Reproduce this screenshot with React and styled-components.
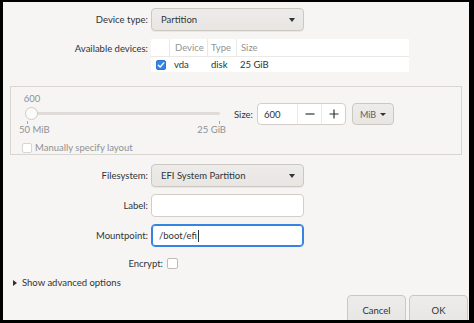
import React from 'react';
import styled, { createGlobalStyle } from "styled-components";

const GlobalStyle = createGlobalStyle`
    html, body {
        margin: 0;
        background: #000;
    }
    body {
        font-family: Lato, "Noto Sans", sans-serif;
        font-size: 9.5px;
        color: #2e3436;
    }
`;

const Dialog = styled.div`
    margin: 2px 0 0 3px;
    width: 466px;
    height: 318px;
    background: #f6f5f4;
    overflow: hidden;
    display: flex;
    flex-direction: column;
`;

const Form = styled.div`
    display: grid;
    grid-template-columns: 145px auto;
    column-gap: 3px;
    row-gap: ${p => p.gap || 8}px;
    justify-items: start;
    align-items: center;
    margin-top: ${p => p.top || 0}px;
`;

const Label = styled.div`
    justify-self: end;
    align-self: ${p => p.top ? 'start' : 'center'};
    margin-top: ${p => p.top ? 4 : 0}px;
    white-space: nowrap;
`;

const Combo = styled.div`
    box-sizing: border-box;
    width: 153px;
    height: 23px;
    display: flex;
    align-items: center;
    justify-content: space-between;
    padding: 0 8px 0 9px;
    background: linear-gradient(#eeecea, #e8e6e3);
    border: 1px solid #cdc7c2;
    border-radius: 4px;
    box-shadow: 0 1px 0 rgba(0,0,0,0.05);
`;

const Arrow = styled.span`
    width: 0;
    height: 0;
    border-left: ${p => p.size || 3.5}px solid transparent;
    border-right: ${p => p.size || 3.5}px solid transparent;
    border-top: ${p => (p.size || 3.5) + 0.5}px solid #2e3436;
`;

const Table = styled.div`
    width: 258px;
    background: #fff;
    display: grid;
    grid-template-columns: 19px 38px 29px 1fr;
`;

const HeadCell = styled.div`
    height: 18px;
    display: flex;
    align-items: center;
    padding-left: ${p => p.pad || 4}px;
    color: #919494;
    border-bottom: 1px solid #ebe9e6;
    border-right: ${p => p.last ? 'none' : '1px solid #ebe9e6'};
    box-sizing: border-box;
`;

const Cell = styled.div`
    height: 15px;
    display: flex;
    align-items: center;
    padding-left: ${p => p.pad || 0}px;
`;

const Check = styled.span`
    box-sizing: border-box;
    width: ${p => p.size || 10}px;
    height: ${p => p.size || 10}px;
    border-radius: 2px;
    display: inline-flex;
    align-items: center;
    justify-content: center;
    flex: none;
    background: ${p => p.checked ? '#3584e4' : '#fff'};
    border: 1px solid ${p => p.checked ? '#2a76d1' : p.dim ? '#d8d4d0' : '#c0bbb6'};
`;

const Frame = styled.div`
    margin: 14px 7px 0;
    border: 1px solid #d8d4d0;
    padding: 6px 0 1px 8px;
`;

const FrameTop = styled.div`
    display: flex;
    align-items: flex-start;
`;

const Scale = styled.div`
    width: 207px;
    color: #8e9192;
`;

const ScaleValue = styled.div`
    width: 26px;
    text-align: center;
    line-height: 12px;
`;

const SliderRow = styled.div`
    position: relative;
    height: 14px;
    margin-top: 2px;
`;

const Trough = styled.div`
    position: absolute;
    left: 8px;
    width: 193px;
    top: 5px;
    height: 3px;
    border-radius: 2px;
    background: #dedbd8;
`;

const Handle = styled.div`
    position: absolute;
    left: 6px;
    top: 0;
    width: 13px;
    height: 13px;
    box-sizing: border-box;
    border-radius: 50%;
    background: #fbfbfa;
    border: 1px solid #cfcbc7;
`;

const Ticks = styled.div`
    display: flex;
    justify-content: space-between;
    padding: 0 6px 0 8px;
    height: 3px;
`;

const Tick = styled.span`
    width: 1px;
    background: #a9a9a9;
`;

const Marks = styled.div`
    display: flex;
    justify-content: space-between;
    line-height: 12px;
`;

const SizeGroup = styled.div`
    display: flex;
    align-items: center;
    margin: 10px 0 0 8px;
`;

const SpinBox = styled.div`
    display: flex;
    height: 22px;
    margin-left: 4px;
    box-sizing: border-box;
    background: #fff;
    border: 1px solid #d3cec9;
    border-radius: 4px;
`;

const SpinEntry = styled.div`
    width: 33px;
    padding-left: 6px;
    display: flex;
    align-items: center;
`;

const SpinButton = styled.div`
    width: 23px;
    display: flex;
    align-items: center;
    justify-content: center;
    border-left: 1px solid #ece9e6;
`;

const Button = styled.div`
    box-sizing: border-box;
    display: flex;
    align-items: center;
    justify-content: center;
    gap: 4px;
    width: ${p => p.w}px;
    height: ${p => p.h || 22}px;
    margin-left: ${p => p.ml || 0}px;
    background: linear-gradient(#eeecea, #e8e6e3);
    border: 1px solid #cdc7c2;
    border-radius: 4px;
    color: ${p => p.dim ? '#5e6163' : '#2e3436'};
    font-size: ${p => p.fs || 9.5}px;
`;

const CheckRow = styled.label`
    display: flex;
    align-items: center;
    gap: 3px;
    margin: 6px 0 0 3px;
    color: #8e9192;
`;

const Entry = styled.div`
    box-sizing: border-box;
    width: 153px;
    height: 23px;
    display: flex;
    align-items: center;
    padding-left: 7px;
    background: #fff;
    border: 1px solid ${p => p.focus ? '#3584e4' : '#d3cec9'};
    box-shadow: ${p => p.focus ? 'inset 0 0 0 1px #3584e4' : 'none'};
    border-radius: 4px;
`;

const Caret = styled.span`
    display: inline-block;
    width: 1px;
    height: 12px;
    background: #2e3436;
    margin-left: 1px;
`;

const EncryptRow = styled.div`
    display: grid;
    grid-template-columns: 160px auto;
    column-gap: 4px;
    align-items: center;
    margin-top: 11px;
    > :first-child { justify-self: end; }
`;

const Expander = styled.div`
    display: flex;
    align-items: center;
    gap: 5px;
    margin: 8px 0 0 10px;
`;

const ExpanderArrow = styled.span`
    width: 0;
    height: 0;
    border-top: 3px solid transparent;
    border-bottom: 3px solid transparent;
    border-left: 4px solid #2e3436;
`;

const Actions = styled.div`
    display: flex;
    justify-content: flex-end;
    gap: 3px;
    margin: 7px 1px 0 0;
`;

const CheckMark = () => (
    <svg width="8" height="8" viewBox="0 0 8 8">
        <path d="M1.3 4.2 L3.2 6 L6.8 1.9" fill="none" stroke="#fff" strokeWidth="1.4" strokeLinecap="round" strokeLinejoin="round" />
    </svg>
);

const Minus = () => (
    <svg width="10" height="10" viewBox="0 0 10 10">
        <path d="M0.5 5 H9.5" stroke="#2e3436" strokeWidth="1.2" />
    </svg>
);

const Plus = () => (
    <svg width="10" height="10" viewBox="0 0 10 10">
        <path d="M0.5 5 H9.5 M5 0.5 V9.5" stroke="#2e3436" strokeWidth="1.2" />
    </svg>
);

const App = () => {
    return (
        <React.Fragment>
            <GlobalStyle />
            <Dialog>
                <Form top={6}>
                    <Label>Device type:</Label>
                    <Combo>Partition<Arrow /></Combo>
                    <Label top>Available devices:</Label>
                    <Table>
                        <HeadCell />
                        <HeadCell pad={5}>Device</HeadCell>
                        <HeadCell pad={3}>Type</HeadCell>
                        <HeadCell last>Size</HeadCell>
                        <Cell pad={5}><Check checked><CheckMark /></Check></Cell>
                        <Cell pad={4}>vda</Cell>
                        <Cell pad={3}>disk</Cell>
                        <Cell pad={3}>25 GiB</Cell>
                    </Table>
                </Form>

                <Frame>
                    <FrameTop>
                        <Scale>
                            <ScaleValue>600</ScaleValue>
                            <SliderRow>
                                <Trough />
                                <Handle />
                            </SliderRow>
                            <Ticks><Tick /><Tick /></Ticks>
                            <Marks><span>50 MiB</span><span>25 GiB</span></Marks>
                        </Scale>
                        <SizeGroup>
                            Size:
                            <SpinBox>
                                <SpinEntry>600</SpinEntry>
                                <SpinButton><Minus /></SpinButton>
                                <SpinButton><Plus /></SpinButton>
                            </SpinBox>
                            <Button w={42} ml={6} dim fs={9}>MiB<Arrow size={3} /></Button>
                        </SizeGroup>
                    </FrameTop>
                    <CheckRow><Check dim />Manually specify layout</CheckRow>
                </Frame>

                <Form top={9} gap={7}>
                    <Label>Filesystem:</Label>
                    <Combo>EFI System Partition<Arrow /></Combo>
                    <Label>Label:</Label>
                    <Entry />
                    <Label>Mountpoint:</Label>
                    <Entry focus>/boot/efi<Caret /></Entry>
                </Form>

                <EncryptRow>
                    <span>Encrypt:</span>
                    <Check size={11} />
                </EncryptRow>

                <Expander><ExpanderArrow />Show advanced options</Expander>

                <Actions>
                    <Button w={59} h={30}>Cancel</Button>
                    <Button w={59} h={30}>OK</Button>
                </Actions>
            </Dialog>
        </React.Fragment>
    )
}

export default App;
